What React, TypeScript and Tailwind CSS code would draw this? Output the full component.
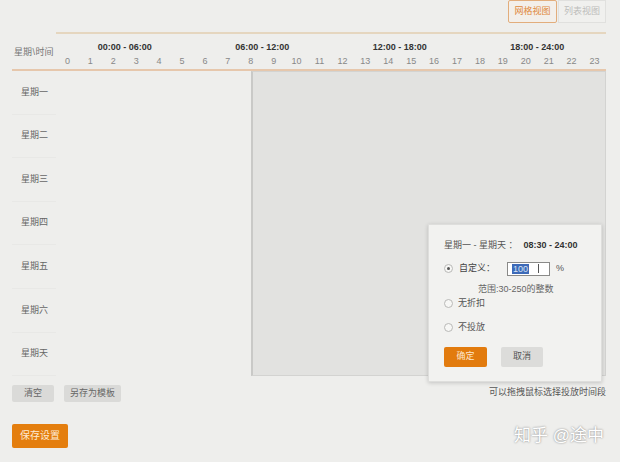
import React from 'react';

const days = ['星期一', '星期二', '星期三', '星期四', '星期五', '星期六', '星期天'];
const groups = ['00:00 - 06:00', '06:00 - 12:00', '12:00 - 18:00', '18:00 - 24:00'];
const hours = Array.from({ length: 24 }, (_, i) => i);
const slash = String.fromCharCode(92);

function Radio({ checked }: { checked?: boolean }) {
  return (
    <span className="w-[9px] h-[9px] rounded-full border border-[#b9b9b7] bg-[#f7f7f5] flex items-center justify-center shrink-0">
      {checked && <span className="w-[3px] h-[3px] rounded-full bg-[#555]" />}
    </span>
  );
}

export default function App() {
  return (
    <div
      className="w-[620px] h-[462px] bg-[#eeeeec] relative overflow-hidden flex flex-col text-[#666]"
      style={{ fontFamily: '"Liberation Sans", "Noto Sans CJK SC", sans-serif' }}
    >
      {/* view tabs */}
      <div className="flex justify-end pr-[14px] h-[23px]">
        <div className="w-[49px] h-[23px] border border-[#e2ad7c] rounded-[2px] bg-[#f3efea] text-[#e0883a] text-[9px] flex items-center justify-center">
          网格视图
        </div>
        <div className="w-[48px] h-[23px] border border-[#e0e0de] bg-[#f0f0ee] text-[#bdbdbb] text-[9px] flex items-center justify-center ml-[1px]">
          列表视图
        </div>
      </div>

      {/* schedule table */}
      <div className="mt-[9px] ml-[12px] w-[594px]">
        <div className="grid grid-cols-[44px_repeat(24,1fr)] border-b-2 border-[#e6c7ac]">
          <div className="row-span-2 flex items-center text-[9px] text-[#777] pl-[2px] pt-[4px] whitespace-nowrap">
            <span>星期</span>
            <span className="inline-block px-[0.5px]">{slash}</span>
            <span>时间</span>
          </div>
          {groups.map((g) => (
            <div
              key={g}
              className="col-span-6 border-t-2 border-[#e5d6bf] h-[22px] flex items-end justify-center text-[9px] font-bold text-[#333]"
            >
              {g}
            </div>
          ))}
          {hours.map((h) => (
            <div key={h} className="h-[15px] flex items-center justify-center text-[9px] text-[#888]">
              {h}
            </div>
          ))}
        </div>

        <div className="grid grid-cols-[44px_repeat(48,1fr)] grid-rows-[repeat(7,43.6px)]">
          {days.map((d, i) => (
            <div
              key={d}
              className="col-start-1 flex items-center text-[9px] text-[#666] pl-[9px] border-b border-[#e8e8e6]"
              style={{ gridRowStart: i + 1 }}
            >
              {d}
            </div>
          ))}
          <div className="col-start-[19] col-end-[50] row-start-1 row-span-7 bg-[#e2e2e0] border border-[#d3d3d1] border-l-2 border-l-[#c9c9c7]" />
        </div>
      </div>

      {/* actions */}
      <div className="flex justify-between items-start ml-[12px] w-[594px] mt-[9px]">
        <div className="flex gap-[10px]">
          <button className="w-[42px] h-[17px] bg-[#dadad8] rounded-[2px] text-[9px] text-[#666]">清空</button>
          <button className="w-[57px] h-[17px] bg-[#dadad8] rounded-[2px] text-[9px] text-[#666]">另存为模板</button>
        </div>
        <div className="text-[9px] text-[#555] pt-[1px]">可以拖拽鼠标选择投放时间段</div>
      </div>

      <div className="ml-[12px] mt-[20px]">
        <button className="w-[56px] h-[24px] bg-[#e47e0e] rounded-[2px] text-[10px] text-[#fde9d2]">保存设置</button>
      </div>

      {/* time-slot popup */}
      <div className="absolute left-[428px] top-[224px] w-[174px] h-[158px] bg-[#f2f2f0] border border-[#dededc] shadow-[0_1px_4px_rgba(0,0,0,0.18)] px-[15px] pt-[14px] text-[9px] text-[#555]">
        <div className="flex items-center gap-[6px]">
          <span>星期一 - 星期天 ：</span>
          <span className="font-bold text-[#333]">08:30 - 24:00</span>
        </div>
        <div className="flex items-center mt-[9px]">
          <Radio checked />
          <span className="ml-[6px] text-[#444]">自定义：</span>
          <div className="ml-[12px] w-[43px] h-[14px] border border-[#8a8a88] bg-white flex items-center pl-[4px] gap-[9px]">
            <span className="bg-[#3d6ab8] text-[#d8e4f6] leading-[10px] px-[1px]">100</span>
            <span className="w-[1px] h-[9px] bg-[#555]" />
          </div>
          <span className="ml-[6px]">%</span>
        </div>
        <div className="mt-[7px] pl-[34px] text-[#666]">范围:30-250的整数</div>
        <div className="flex items-center mt-[1px] gap-[5px]">
          <Radio />
          <span>无折扣</span>
        </div>
        <div className="flex items-center mt-[10px] gap-[5px]">
          <Radio />
          <span>不投放</span>
        </div>
        <div className="flex gap-[14px] mt-[13px]">
          <button className="w-[43px] h-[20px] bg-[#e27b0e] rounded-[2px] text-[9px] text-[#fde6cc]">确定</button>
          <button className="w-[42px] h-[20px] bg-[#dcdcda] rounded-[2px] text-[9px] text-[#555]">取消</button>
        </div>
      </div>

      {/* watermark */}
      <div className="absolute left-[514px] top-[423px] text-[17px] text-white [text-shadow:0_0_2px_rgba(0,0,0,0.5)]">
        知乎 @途中
      </div>
    </div>
  );
}
